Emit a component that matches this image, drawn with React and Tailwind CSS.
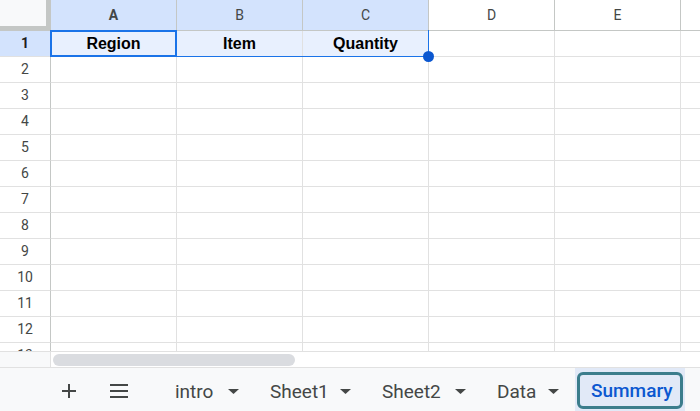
import React from 'react';

const columns = [
  { label: 'A', selected: true, active: true },
  { label: 'B', selected: true },
  { label: 'C', selected: true },
  { label: 'D' },
  { label: 'E' },
  { label: '' },
];

const headerRow = ['Region', 'Item', 'Quantity'];

const tabs = [
  { name: 'intro', width: 'w-[95px]' },
  { name: 'Sheet1', width: 'w-[112px]' },
  { name: 'Sheet2', width: 'w-[115px]' },
  { name: 'Data', width: 'w-[93px]' },
];

function Caret() {
  return (
    <svg width="11" height="5" viewBox="0 0 11 5" className="shrink-0">
      <path d="M0 0h11L5.5 5z" fill="#444746" />
    </svg>
  );
}

function ColumnHeader({ col }) {
  return (
    <div
      className={`w-[126px] shrink-0 h-[31px] border-r border-b border-[#c4c7c5] flex items-center justify-center pt-[1px] text-[14px] text-[#444746] ${
        col.selected ? 'bg-[#d3e3fd]' : 'bg-white'
      } ${col.active ? 'font-bold text-[#1f1f1f]' : ''}`}
    >
      {col.label}
    </div>
  );
}

function Row({ n }) {
  const first = n === 1;
  return (
    <div className="flex h-[26px] shrink-0">
      <div
        className={`w-[51px] shrink-0 border-r border-r-[#c4c7c5] border-b border-b-[#e1e1e1] flex items-center justify-center text-[14px] ${
          first ? 'bg-[#d3e3fd] font-bold text-[#1f1f1f]' : 'bg-white text-[#444746]'
        }`}
      >
        {n}
      </div>
      {columns.map((c, i) => (
        <div
          key={i}
          className={`w-[126px] shrink-0 border-r border-b border-[#e1e1e1] flex items-center justify-center pt-[1px] font-bold text-[16px] text-black ${
            first && i < 3 ? 'bg-[#e8f0fe]' : 'bg-white'
          }`}
          style={{ fontFamily: '"Liberation Sans", Arial, sans-serif' }}
        >
          {first && i < 3 ? headerRow[i] : ''}
        </div>
      ))}
    </div>
  );
}

export default function App() {
  const rows = Array.from({ length: 13 }, (_, i) => i + 1);

  return (
    <div className="w-[700px] h-[411px] overflow-hidden bg-white flex flex-col font-['Roboto',sans-serif]">
      <div className="relative shrink-0">
        {/* column headers */}
        <div className="flex h-[31px]">
          <div className="w-[51px] h-[31px] shrink-0 bg-[#c4c7c5]">
            <div className="w-[46px] h-[26px] bg-[#f8f9fa]" />
          </div>
          {columns.map((c, i) => (
            <ColumnHeader key={i} col={c} />
          ))}
        </div>

        {/* rows */}
        <div className="h-[320px] overflow-hidden flex flex-col">
          {rows.map((n) => (
            <Row key={n} n={n} />
          ))}
        </div>

        {/* selection */}
        <div className="absolute left-[50px] top-[30px] w-[379px] h-[27px] border-r border-b border-[#1a73e8] pointer-events-none" />
        <div className="absolute left-[50px] top-[30px] w-[127px] h-[27px] border-2 border-[#1a73e8] pointer-events-none" />
        <div className="absolute left-[423px] top-[51px] w-[11px] h-[11px] rounded-full bg-[#0b57d0]" />
      </div>

      {/* horizontal scrollbar */}
      <div className="h-[17px] shrink-0 flex border-t border-b border-[#e1e1e1]">
        <div className="w-[51px] shrink-0 bg-[#f8f9fa] border-r border-[#e1e1e1]" />
        <div className="flex-1 flex items-center pl-[2px]">
          <div className="w-[242px] h-[12px] rounded-full bg-[#dadce0]" />
        </div>
      </div>

      {/* sheet tabs */}
      <div className="flex-1 bg-[#f8f9fa] flex items-stretch text-[19px] text-[#444746]">
        <div className="flex items-center pl-[62px] pt-[3px]">
          <svg width="14" height="14" viewBox="0 0 14 14">
            <path d="M7 0v14M0 7h14" stroke="#444746" strokeWidth="2" />
          </svg>
          <svg width="18" height="14" viewBox="0 0 18 14" className="ml-[34px]">
            <path d="M0 1h18M0 7h18M0 13h18" stroke="#444746" strokeWidth="2" />
          </svg>
        </div>
        <div className="flex ml-[32px]">
          {tabs.map((t) => (
            <div key={t.name} className={`${t.width} flex items-center justify-between pl-[15px] pr-[16px] pt-[4px]`}>
              <span>{t.name}</span>
              <Caret />
            </div>
          ))}
          <div className="w-[110px] bg-[#e1e9f7] pl-[2px] pt-[4px] pb-[3px]">
            <div className="w-[106px] h-full border-[3px] border-[#3b7d8c] rounded-[6px] flex items-center pl-[11px] pt-[2px] font-medium text-[#0b57d0]">
              Summary
            </div>
          </div>
        </div>
      </div>
    </div>
  );
}
